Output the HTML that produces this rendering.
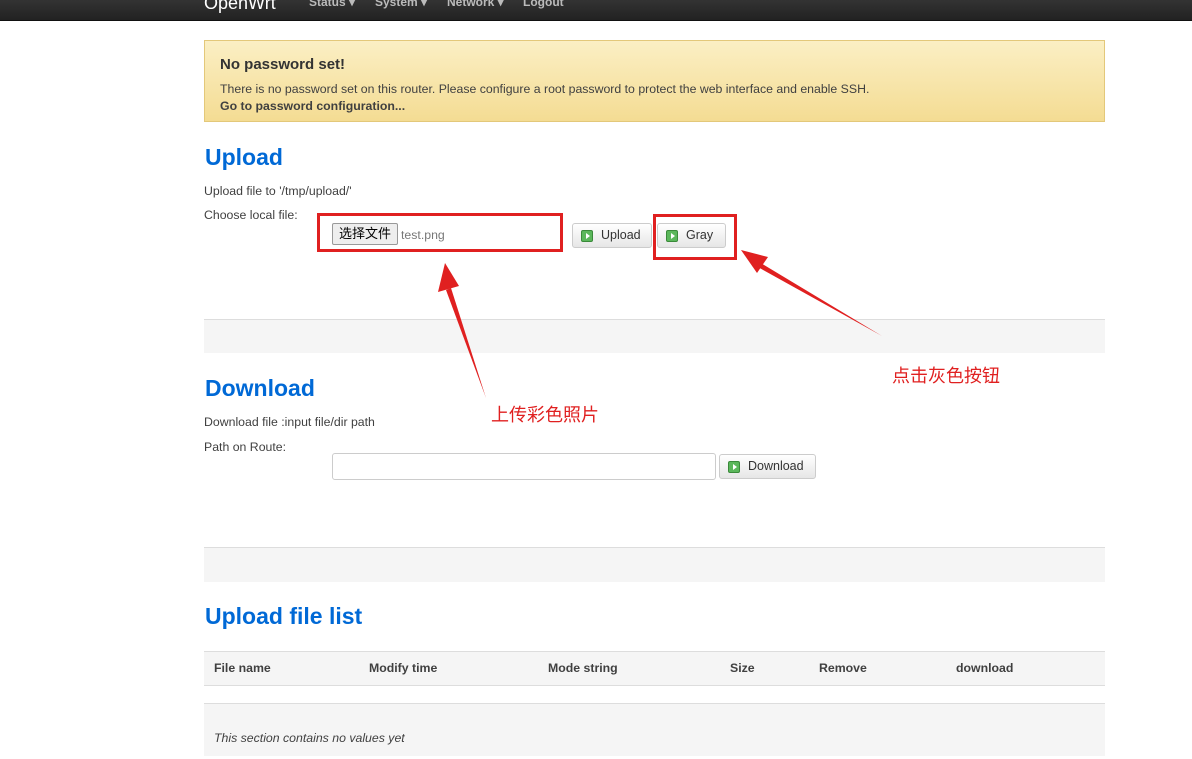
<!DOCTYPE html>
<html><head><meta charset="utf-8"><style>
*{box-sizing:border-box;margin:0;padding:0}
body{width:1192px;height:759px;overflow:hidden;background:#fff;font-family:"Liberation Sans","Noto Sans CJK SC",sans-serif;color:#404040;position:relative}
.nav{position:absolute;left:0;top:0;width:1192px;height:21px;background:linear-gradient(#333,#222);border-bottom:1px solid #111}
.nav span{position:absolute;top:-5px;color:#bbb;font-size:12px;font-weight:bold}
.abs{position:absolute}
.alert{left:204px;top:40px;width:901px;height:82px;background:linear-gradient(#fbefc4,#f4dc93);border:1px solid #e3c87a}
h2{position:absolute;color:#0069d6;font-size:23px;font-weight:bold}
.t{position:absolute;font-size:12.3px;color:#404040}
.btn{position:absolute;height:25px;border:1px solid #ccc;border-radius:3px;background:linear-gradient(#fff,#e6e6e6);font-size:12.5px;color:#333;line-height:23px;padding-left:28px}
.btn i{position:absolute;left:8px;top:6px;width:12px;height:12px;background:#5bb75b;border:1px solid #3a8a3a;border-radius:2px}
.btn i:after{content:"";position:absolute;left:4px;top:2px;border-left:4px solid #fff;border-top:3px solid transparent;border-bottom:3px solid transparent}
.red{position:absolute;border:3px solid #e02020}
.band{position:absolute;left:204px;width:901px;background:#f5f5f5;border-top:1px solid #ddd}
.th{position:absolute;top:661px;font-size:12.3px;font-weight:bold;color:#404040}
.cn{position:absolute;color:#e02020;font-size:18px}
</style></head><body>
<div class="nav"><span style="left:204px;font-size:18px;top:-7px;color:#fff;font-weight:normal">OpenWrt</span><span style="left:309px">Status ▾</span><span style="left:375px">System ▾</span><span style="left:447px">Network ▾</span><span style="left:523px">Logout</span></div>
<div class="abs alert"></div>
<div class="t" style="left:220px;top:56px;font-size:15px;font-weight:bold;color:#333">No password set!</div>
<div class="t" style="left:220px;top:82px">There is no password set on this router. Please configure a root password to protect the web interface and enable SSH.</div>
<div class="t" style="left:220px;top:99px;font-weight:bold">Go to password configuration...</div>
<h2 style="left:205px;top:144px">Upload</h2>
<div class="t" style="left:204px;top:184px">Upload file to '/tmp/upload/'</div>
<div class="t" style="left:204px;top:208px">Choose local file:</div>
<div class="abs" style="left:332px;top:223px;width:66px;height:22px;border:1px solid #999;border-radius:2px;background:#eee;font-size:13px;line-height:20px;text-align:center;color:#000">选择文件</div>
<div class="t" style="left:401px;top:228px;color:#777">test.png</div>
<div class="red" style="left:317px;top:213px;width:246px;height:39px"></div>
<div class="btn" style="left:572px;top:223px;width:80px"><i></i>Upload</div>
<div class="btn" style="left:657px;top:223px;width:69px"><i></i>Gray</div>
<div class="red" style="left:653px;top:214px;width:84px;height:46px"></div>
<div class="band" style="top:319px;height:34px"></div>
<h2 style="left:205px;top:375px">Download</h2>
<div class="t" style="left:204px;top:415px">Download file :input file/dir path</div>
<div class="t" style="left:204px;top:440px">Path on Route:</div>
<div class="abs" style="left:332px;top:453px;width:384px;height:27px;border:1px solid #ccc;border-radius:3px"></div>
<div class="btn" style="left:719px;top:454px;width:97px"><i></i>Download</div>
<div class="band" style="top:547px;height:35px"></div>
<h2 style="left:205px;top:603px">Upload file list</h2>
<div class="band" style="top:651px;height:35px;border-bottom:1px solid #ddd"></div>
<div class="th" style="left:214px">File name</div><div class="th" style="left:369px">Modify time</div><div class="th" style="left:548px">Mode string</div><div class="th" style="left:730px">Size</div><div class="th" style="left:819px">Remove</div><div class="th" style="left:956px">download</div>
<div class="band" style="top:703px;height:53px"></div>
<div class="t" style="left:214px;top:731px;font-style:italic">This section contains no values yet</div>
<div class="cn" style="left:491px;top:401px">上传彩色照片</div>
<div class="cn" style="left:892px;top:362px">点击灰色按钮</div>
<svg class="abs" style="left:0;top:0" width="1192" height="759">
<polygon points="486,398 451,288 446,290" fill="#e02020"/>
<polygon points="445,263 438,292 459,286" fill="#e02020"/>
<polygon points="882,336 759,262 756,266" fill="#e02020"/>
<polygon points="741,250 757,273 768,257" fill="#e02020"/>
</svg>
</body></html>
